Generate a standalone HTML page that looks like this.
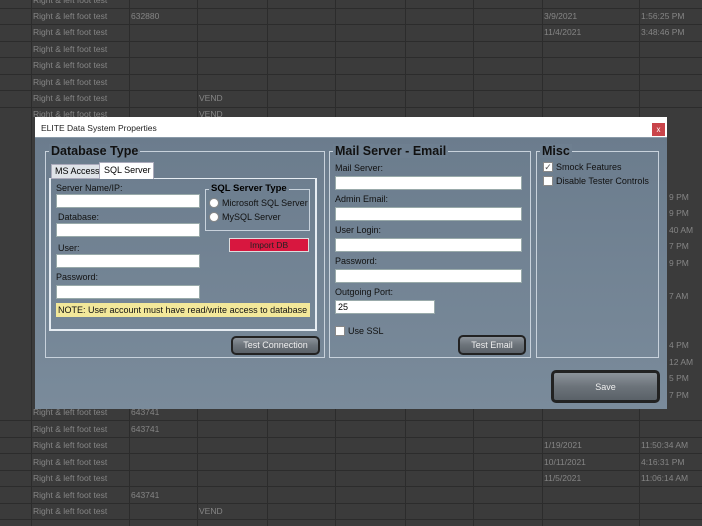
<!DOCTYPE html>
<html><head><style>
*{box-sizing:border-box;margin:0;padding:0}
body{width:702px;height:526px;overflow:hidden;background:#3b3b3b;font-family:"Liberation Sans",sans-serif;position:relative}
.a{position:absolute;white-space:nowrap}
.hl{position:absolute;left:0;width:702px;height:1px;background:#2c2c2c}
.vl{position:absolute;top:0;height:526px;width:1px;background:#2c2c2c}
.g{position:absolute;font-size:8.5px;color:#858585;white-space:nowrap}
.t{position:absolute;font-size:9px;color:#111;white-space:nowrap}
.in{position:absolute;background:#fff;height:14px;border:1px solid #9aa}
.fs{position:absolute;border:1px solid #c8d2dc}
.lg{position:absolute;background:#6e7f90;font-weight:bold;color:#111;font-size:12.5px;padding:0 2px;line-height:14px;white-space:nowrap}
.btn{position:absolute;border:2px solid #222;border-radius:5px;background:linear-gradient(#8c939a,#6c737a 50%,#5a6168);color:#eee;font-size:9px;text-align:center;white-space:nowrap}
.cb{position:absolute;width:10px;height:10px;background:#fff;border:1px solid #888}
.rb{position:absolute;width:10px;height:10px;border-radius:50%;background:#fff;border:1px solid #888}
</style></head><body>
<div class="hl" style="top:8px"></div><div class="hl" style="top:24px"></div><div class="hl" style="top:41px"></div><div class="hl" style="top:57px"></div><div class="hl" style="top:74px"></div><div class="hl" style="top:90px"></div><div class="hl" style="top:107px"></div>
<div class="hl" style="top:420px"></div><div class="hl" style="top:437px"></div><div class="hl" style="top:453px"></div><div class="hl" style="top:470px"></div><div class="hl" style="top:486px"></div><div class="hl" style="top:503px"></div><div class="hl" style="top:519px"></div>
<div class="vl" style="left:31px"></div><div class="vl" style="left:129px"></div><div class="vl" style="left:197px"></div><div class="vl" style="left:267px"></div><div class="vl" style="left:335px"></div><div class="vl" style="left:405px"></div><div class="vl" style="left:473px"></div><div class="vl" style="left:542px"></div><div class="vl" style="left:639px"></div>
<div class="g" style="left:33px;top:-5px">Right &amp; left foot test</div>
<div class="g" style="left:33px;top:11px">Right &amp; left foot test</div><div class="g" style="left:131px;top:11px">632880</div><div class="g" style="left:544px;top:11px">3/9/2021</div><div class="g" style="left:641px;top:11px">1:56:25 PM</div>
<div class="g" style="left:33px;top:27px">Right &amp; left foot test</div><div class="g" style="left:544px;top:27px">11/4/2021</div><div class="g" style="left:641px;top:27px">3:48:46 PM</div>
<div class="g" style="left:33px;top:44px">Right &amp; left foot test</div>
<div class="g" style="left:33px;top:60px">Right &amp; left foot test</div>
<div class="g" style="left:33px;top:77px">Right &amp; left foot test</div>
<div class="g" style="left:33px;top:93px">Right &amp; left foot test</div><div class="g" style="left:199px;top:93px">VEND</div>
<div class="g" style="left:33px;top:109px">Right &amp; left foot test</div><div class="g" style="left:199px;top:109px">VEND</div>
<div class="g" style="left:33px;top:407px">Right &amp; left foot test</div><div class="g" style="left:131px;top:407px">643741</div>
<div class="g" style="left:33px;top:424px">Right &amp; left foot test</div><div class="g" style="left:131px;top:424px">643741</div>
<div class="g" style="left:33px;top:440px">Right &amp; left foot test</div><div class="g" style="left:544px;top:440px">1/19/2021</div><div class="g" style="left:641px;top:440px">11:50:34 AM</div>
<div class="g" style="left:33px;top:457px">Right &amp; left foot test</div><div class="g" style="left:544px;top:457px">10/11/2021</div><div class="g" style="left:641px;top:457px">4:16:31 PM</div>
<div class="g" style="left:33px;top:473px">Right &amp; left foot test</div><div class="g" style="left:544px;top:473px">11/5/2021</div><div class="g" style="left:641px;top:473px">11:06:14 AM</div>
<div class="g" style="left:33px;top:490px">Right &amp; left foot test</div><div class="g" style="left:131px;top:490px">643741</div>
<div class="g" style="left:33px;top:506px">Right &amp; left foot test</div><div class="g" style="left:199px;top:506px">VEND</div>
<div class="g" style="left:669px;top:192px">9 PM</div><div class="g" style="left:669px;top:208px">9 PM</div><div class="g" style="left:669px;top:225px">40 AM</div><div class="g" style="left:669px;top:241px">7 PM</div><div class="g" style="left:669px;top:258px">9 PM</div><div class="g" style="left:669px;top:291px">7 AM</div><div class="g" style="left:669px;top:340px">4 PM</div><div class="g" style="left:669px;top:357px">12 AM</div><div class="g" style="left:669px;top:373px">5 PM</div><div class="g" style="left:669px;top:390px">7 PM</div>

<div class="a" style="left:35px;top:117px;width:632px;height:292px;background:linear-gradient(#6a7b8c,#7a8b9b)"></div>
<div class="a" style="left:35px;top:117px;width:632px;height:21px;background:#fff;border-bottom:1px solid #8a9aa8"></div>
<div class="a" style="left:41px;top:123px;font-size:8.5px;color:#222">ELITE Data System Properties</div>
<div class="a" style="left:652px;top:123px;width:13px;height:13px;background:#c9444a;color:#fff;font-size:8px;text-align:center;line-height:13px">x</div>

<div class="fs" style="left:45px;top:151px;width:280px;height:207px"></div>
<div class="lg" style="left:49px;top:144px">Database Type</div>
<div class="a" style="left:49px;top:178px;width:268px;height:153px;border:2px solid #e6ecf2;border-top-width:1px"></div>
<div class="a" style="left:51px;top:164px;width:49px;height:15px;background:#dfe3e8;border:1px solid #aab;font-size:9px;line-height:13px;padding-left:3px">MS Access</div>
<div class="a" style="left:99px;top:162px;width:55px;height:17px;background:#fff;border:1px solid #aab;border-bottom:none;font-size:9px;line-height:15px;padding-left:4px">SQL Server</div>
<div class="t" style="left:56px;top:183px">Server Name/IP:</div><div class="in" style="left:56px;top:194px;width:144px"></div>
<div class="t" style="left:58px;top:212px">Database:</div><div class="in" style="left:56px;top:223px;width:144px"></div>
<div class="t" style="left:58px;top:243px">User:</div><div class="in" style="left:56px;top:254px;width:144px"></div>
<div class="t" style="left:56px;top:272px">Password:</div><div class="in" style="left:56px;top:285px;width:144px"></div>
<div class="fs" style="left:205px;top:189px;width:105px;height:42px"></div>
<div class="a" style="left:209px;top:183px;background:#6e7f90;font-weight:bold;font-size:9.5px;padding:0 2px">SQL Server Type</div>
<div class="rb" style="left:209px;top:198px"></div><div class="t" style="left:222px;top:198px">Microsoft SQL Server</div>
<div class="rb" style="left:209px;top:212px"></div><div class="t" style="left:222px;top:212px">MySQL Server</div>
<div class="a" style="left:229px;top:238px;width:80px;height:14px;background:#d8173f;border:1px solid #ddd;font-size:8.5px;text-align:center;line-height:12px;color:#222">Import DB</div>
<div class="a" style="left:56px;top:303px;width:254px;height:14px;background:#f3e89a;font-size:9px;line-height:14px;padding-left:2px;color:#111">NOTE: User account must have read/write access to database</div>
<div class="btn" style="left:231px;top:336px;width:89px;height:19px;line-height:15px">Test Connection</div>

<div class="fs" style="left:329px;top:151px;width:202px;height:207px"></div>
<div class="lg" style="left:333px;top:144px">Mail Server - Email</div>
<div class="t" style="left:335px;top:163px">Mail Server:</div><div class="in" style="left:335px;top:176px;width:187px"></div>
<div class="t" style="left:335px;top:194px">Admin Email:</div><div class="in" style="left:335px;top:207px;width:187px"></div>
<div class="t" style="left:335px;top:225px">User Login:</div><div class="in" style="left:335px;top:238px;width:187px"></div>
<div class="t" style="left:335px;top:256px">Password:</div><div class="in" style="left:335px;top:269px;width:187px"></div>
<div class="t" style="left:335px;top:287px">Outgoing Port:</div><div class="in" style="left:335px;top:300px;width:100px;font-size:9px;padding-left:2px;line-height:12px">25</div>
<div class="cb" style="left:335px;top:326px"></div><div class="t" style="left:348px;top:326px">Use SSL</div>
<div class="btn" style="left:458px;top:335px;width:68px;height:20px;line-height:16px">Test Email</div>

<div class="fs" style="left:536px;top:151px;width:123px;height:207px"></div>
<div class="lg" style="left:540px;top:144px">Misc</div>
<div class="cb" style="left:543px;top:162px;font-size:9px;line-height:8px;color:#555;text-align:center">✓</div><div class="t" style="left:556px;top:162px">Smock Features</div>
<div class="cb" style="left:543px;top:176px"></div><div class="t" style="left:556px;top:176px">Disable Tester Controls</div>
<div class="btn" style="left:551px;top:370px;width:109px;height:33px;line-height:29px;border-width:3px">Save</div>
</body></html>
